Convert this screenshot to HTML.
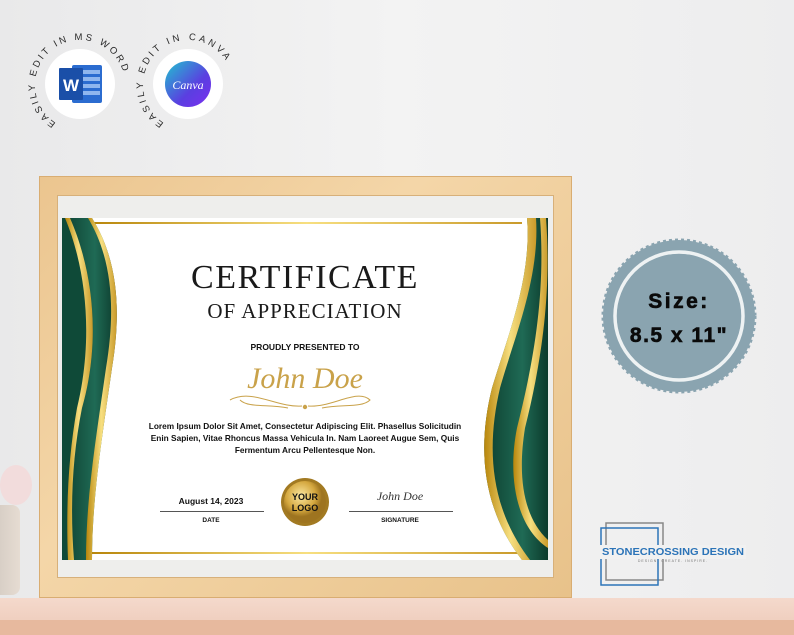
<!DOCTYPE html>
<html><head><meta charset="utf-8"><style>
*{margin:0;padding:0;box-sizing:border-box}
body{width:794px;height:635px;overflow:hidden;background:linear-gradient(90deg,#e9e9ea,#f3f3f3 50%,#ededee);font-family:"Liberation Sans",sans-serif;position:relative}
.abs{position:absolute}
</style></head><body>
<!-- shelf -->
<div class="abs" style="left:0;top:598px;width:794px;height:23px;background:linear-gradient(#f4d9cc,#f0cfbf)"></div>
<div class="abs" style="left:0;top:620px;width:794px;height:15px;background:#e7b99e"></div>
<!-- plush left -->
<div class="abs" style="left:0;top:465px;width:32px;height:40px;border-radius:50%;background:#f2dcdc"></div>
<div class="abs" style="left:0;top:505px;width:20px;height:90px;background:linear-gradient(90deg,#d8cfc6,#e6dcd2);border-radius:0 8px 8px 0"></div>

<!-- badges -->
<svg class="abs" style="left:0;top:20px" width="260" height="110">
<defs><path id="c1" d="M56,103 A45,45 0 1 1 104,103"/><path id="c2" d="M164,103 A45,45 0 1 1 212,103"/></defs>
<circle cx="80" cy="64" r="35" fill="#fff"/><circle cx="188" cy="64" r="35" fill="#fff"/>
<text font-size="9.5" letter-spacing="2.6" fill="#2a2a2a" font-family="Liberation Sans"><textPath href="#c1">EASILY EDIT IN MS WORD</textPath></text>
<text font-size="9.5" letter-spacing="3" fill="#2a2a2a" font-family="Liberation Sans"><textPath href="#c2">EASILY EDIT IN CANVA</textPath></text>
<rect x="72" y="45" width="30" height="38" rx="2" fill="#2b6cd0"/>
<rect x="78" y="50" width="22" height="4" fill="#8fb6ee"/><rect x="78" y="57" width="22" height="4" fill="#8fb6ee"/><rect x="78" y="64" width="22" height="4" fill="#8fb6ee"/><rect x="78" y="71" width="22" height="4" fill="#8fb6ee"/>
<rect x="59" y="48" width="24" height="32" rx="1" fill="#1a4fa8"/>
<text x="71" y="71" font-size="17" font-weight="bold" fill="#fff" text-anchor="middle">W</text>
<defs><linearGradient id="cg" x1="0" y1="0" x2="1" y2="1"><stop offset="0" stop-color="#20c4cf"/><stop offset=".6" stop-color="#5a3fe0"/><stop offset="1" stop-color="#7b2ff0"/></linearGradient></defs>
<circle cx="188" cy="64" r="23" fill="url(#cg)"/>
<text x="188" y="69" font-size="12" font-style="italic" font-family="Liberation Serif" fill="#fff" text-anchor="middle">Canva</text>
</svg>

<!-- frame -->
<div class="abs" style="left:39px;top:176px;width:533px;height:422px;background:linear-gradient(135deg,#ebc58f,#f4d6a8 40%,#e8c28a);border:1px solid #d9ad72"></div>
<div class="abs" style="left:57px;top:195px;width:497px;height:383px;background:#eeeeec;border:1px solid #d7b07a"></div>
<svg class="abs" style="left:62px;top:218px" width="486" height="342">
<defs>
<linearGradient id="gd" x1="0" y1="0" x2="1" y2="0"><stop offset="0" stop-color="#b8860b"/><stop offset=".5" stop-color="#f7df80"/><stop offset="1" stop-color="#c99a2a"/></linearGradient>
<linearGradient id="gr" x1="0" y1="0" x2="1" y2="0"><stop offset="0" stop-color="#0d3f2f"/><stop offset=".6" stop-color="#1f6a55"/><stop offset="1" stop-color="#0c3a2b"/></linearGradient>
</defs>
<rect width="486" height="342" fill="#fff"/>
<rect x="30" y="4" width="430" height="2" fill="url(#gd)"/>
<rect x="30" y="334" width="430" height="2" fill="url(#gd)"/>
<path d="M0,0 L30,0 C55,40 60,90 50,150 C40,220 30,280 30,342 L0,342Z" fill="url(#gr)"/>
<path d="M0,0 L8,0 C30,50 40,120 20,190 C10,240 8,290 12,342 L0,342Z" fill="#0f4a38"/>
<path d="M30,0 C55,40 60,90 50,150 C40,220 30,280 30,342 L24,342 C24,280 34,220 44,150 C54,90 50,40 26,0Z" fill="url(#gd)"/>
<path d="M8,0 C30,50 40,120 20,190 C10,240 8,290 12,342 L6,342 C4,290 6,240 15,190 C32,120 24,50 3,0Z" fill="url(#gd)"/>
<path d="M486,0 L465,0 C470,60 445,120 430,170 C415,230 420,290 460,342 L486,342Z" fill="url(#gr)"/>
<path d="M465,0 C470,60 445,120 430,170 C415,230 420,290 460,342 L468,342 C428,290 424,230 438,170 C452,120 478,60 474,0Z" fill="url(#gd)"/>
<path d="M478,0 C484,80 470,150 455,210 C445,260 455,310 486,330 L486,322 C462,300 455,260 463,210 C478,150 490,80 484,0Z" fill="url(#gd)"/>
<text x="243" y="70" text-anchor="middle" font-family="Liberation Serif" font-size="34" letter-spacing="1.5" fill="#1a1a1a">CERTIFICATE</text>
<text x="243" y="100" text-anchor="middle" font-family="Liberation Serif" font-size="21" letter-spacing="1" fill="#1a1a1a">OF APPRECIATION</text>
<text x="243" y="132" text-anchor="middle" font-size="8.5" font-weight="bold" fill="#111">PROUDLY PRESENTED TO</text>
<text x="243" y="170" text-anchor="middle" font-family="Liberation Serif" font-style="italic" font-size="30" fill="#c9a24a">John Doe</text>
<path d="M168,182 C190,170 215,190 240,188 M246,188 C270,190 295,170 308,182 C300,190 280,186 260,190 M226,190 C206,186 186,190 178,182" stroke="#c9a24a" stroke-width="1" fill="none"/>
<circle cx="243" cy="189" r="2.2" fill="#c9a24a"/>
<g font-size="8.3" font-weight="bold" fill="#111" text-anchor="middle">
<text x="243" y="211">Lorem Ipsum Dolor Sit Amet, Consectetur Adipiscing Elit. Phasellus Solicitudin</text>
<text x="243" y="223">Enin Sapien, Vitae Rhoncus Massa Vehicula In. Nam Laoreet Augue Sem, Quis</text>
<text x="243" y="235">Fermentum Arcu Pellentesque Non.</text>
</g>
<text x="149" y="286" text-anchor="middle" font-size="8.5" font-weight="bold" fill="#111">August 14, 2023</text>
<rect x="98" y="293" width="104" height="1" fill="#555"/>
<text x="149" y="304" text-anchor="middle" font-size="6.5" font-weight="bold" fill="#111">DATE</text>
<text x="338" y="282" text-anchor="middle" font-family="Liberation Serif" font-style="italic" font-size="12" fill="#333">John Doe</text>
<rect x="287" y="293" width="104" height="1" fill="#555"/>
<text x="338" y="304" text-anchor="middle" font-size="6.5" font-weight="bold" fill="#111">SIGNATURE</text>
<defs><radialGradient id="lg" cx=".4" cy=".35"><stop offset="0" stop-color="#fbe7a0"/><stop offset=".7" stop-color="#d4a73e"/><stop offset="1" stop-color="#9e7420"/></radialGradient></defs>
<circle cx="243" cy="284" r="24" fill="#a27a22"/><circle cx="243" cy="284" r="21" fill="url(#lg)"/>
<text x="243" y="282" text-anchor="middle" font-size="9" font-weight="bold" fill="#111">YOUR</text>
<text x="243" y="293" text-anchor="middle" font-size="9" font-weight="bold" fill="#111">LOGO</text>
</svg>

<!-- size stamp -->
<svg class="abs" style="left:600px;top:238px" width="160" height="160">
<circle cx="79" cy="78" r="76" fill="#8aa4b0" stroke="#8aa4b0" stroke-width="3" stroke-dasharray="3 3"/>
<circle cx="79" cy="78" r="64" fill="none" stroke="#eef2f3" stroke-width="3.5"/>
<circle cx="79" cy="78" r="62" fill="#8aa4b0"/>
<text x="79" y="70" text-anchor="middle" font-size="21" font-weight="bold" letter-spacing="2.5" fill="#0a0a0a" stroke="#0a0a0a" stroke-width=".6">Size:</text>
<text x="79" y="104" text-anchor="middle" font-size="21" font-weight="bold" letter-spacing="1.5" fill="#0a0a0a" stroke="#0a0a0a" stroke-width=".6">8.5 x 11"</text>
</svg>

<!-- stonecrossing -->
<svg class="abs" style="left:598px;top:520px" width="150" height="70">
<rect x="8" y="3" width="57" height="57" fill="none" stroke="#888" stroke-width="1.5"/>
<rect x="3" y="8" width="57" height="57" fill="none" stroke="#2c74b8" stroke-width="1.5"/>
<rect x="2" y="25" width="146" height="14" fill="#f1f1f1"/>
<text x="4" y="35" font-size="10" font-weight="bold" fill="#2c74b8" textLength="142" lengthAdjust="spacingAndGlyphs">STONECROSSING DESIGN</text>
<text x="75" y="42" text-anchor="middle" font-size="3.5" fill="#777" letter-spacing="1">DESIGN. CREATE. INSPIRE.</text>
</svg>
</body></html>
